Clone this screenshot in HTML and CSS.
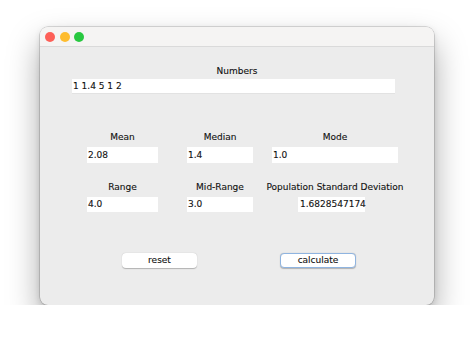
FILE: index.html
```html
<!DOCTYPE html>
<html>
<head>
<meta charset="utf-8">
<link rel="stylesheet" href="styles.css">
</head>
<body>
<div class="window">
  <div class="titlebar">
    <span class="light red"></span>
    <span class="light yellow"></span>
    <span class="light green"></span>
  </div>
  <div class="content">
    <div class="numbers">
      <div class="label">Numbers</div>
      <div class="field wide">1 1.4 5 1 2</div>
    </div>
    <div class="grid row1">
      <div class="cell">
        <div class="label">Mean</div>
        <div class="field f1">2.08</div>
      </div>
      <div class="cell">
        <div class="label">Median</div>
        <div class="field f2">1.4</div>
      </div>
      <div class="cell wide-cell">
        <div class="label">Mode</div>
        <div class="field f3">1.0</div>
      </div>
    </div>
    <div class="grid row2">
      <div class="cell">
        <div class="label">Range</div>
        <div class="field f1">4.0</div>
      </div>
      <div class="cell">
        <div class="label">Mid-Range</div>
        <div class="field f2">3.0</div>
      </div>
      <div class="cell wide-cell">
        <div class="label">Population Standard Deviation</div>
        <div class="field f4">1.6828547174</div>
      </div>
    </div>
    <div class="buttons">
      <div class="btn">reset</div>
      <div class="btn primary">calculate</div>
    </div>
  </div>
</div>
</body>
</html>
```
FILE: styles.css
```css
html, body {
  margin: 0;
  padding: 0;
  background: #ffffff;
}
body {
  padding: 27px 0 0 40px;
  font-family: "DejaVu Sans", "Open Sans", sans-serif;
  font-size: 9px;
  color: #111111;
  -webkit-text-stroke: 0.12px #111111;
}
.window {
  width: 394px;
  height: 278px;
  border-radius: 8px;
  background: #ececec;
  box-shadow: 0 0 0 0.5px rgba(0,0,0,0.25), 0 16px 32px rgba(0,0,0,0.34), 0 2px 6px rgba(0,0,0,0.12);
  overflow: hidden;
  display: flex;
  flex-direction: column;
}
.titlebar {
  height: 20px;
  background: #f5f4f3;
  border-bottom: 1px solid #dadada;
  box-sizing: border-box;
  display: flex;
  align-items: center;
  padding-left: 5px;
  gap: 4.5px;
}
.light {
  width: 10px;
  height: 10px;
  border-radius: 50%;
  display: block;
}
.red { background: #fd5f57; }
.yellow { background: #febc2e; }
.green { background: #28c840; }
.content {
  display: flex;
  flex-direction: column;
  padding-top: 17px;
}
.label {
  height: 14px;
  line-height: 14px;
  text-align: center;
  white-space: nowrap;
}
.field {
  background: #ffffff;
  box-sizing: border-box;
  padding-left: 1px;
  white-space: nowrap;
}
.numbers {
  display: flex;
  flex-direction: column;
}
.wide {
  margin: 1px 0 0 32px;
  width: 323px;
  height: 14px;
  line-height: 14px;
  box-shadow: 0 1px 0 #e2e2e2;
}
.grid {
  display: grid;
  grid-template-columns: 71px 66px 136px;
  column-gap: 29px;
  margin-left: 47px;
}
.grid .cell {
  display: flex;
  flex-direction: column;
  align-items: center;
}
.grid .wide-cell {
  width: 136px;
  justify-self: start;
  margin-left: -15px;
}
.row1 { margin-top: 37px; }
.row2 { margin-top: 17px; }
.row1 .field { height: 16px; line-height: 16px; margin-top: 3px; }
.row2 .field { height: 15px; line-height: 15px; margin-top: 3px; }
.f1 { width: 71px; }
.f2 { width: 66px; }
.f3 { width: 126px; }
.f4 { width: 67px; margin-right: 7px; padding-left: 2px; }
.buttons {
  display: flex;
  margin-top: 41px;
  margin-left: 82px;
  gap: 83px;
}
.btn {
  width: 75px;
  height: 15px;
  line-height: 14px;
  box-sizing: border-box;
  background: #ffffff;
  border-radius: 4px;
  text-align: center;
  box-shadow: 0 0.5px 1px rgba(0,0,0,0.25);
}
.primary {
  width: 76px;
  border: 1px solid #8fb4e0;
  line-height: 13px;
}
```
